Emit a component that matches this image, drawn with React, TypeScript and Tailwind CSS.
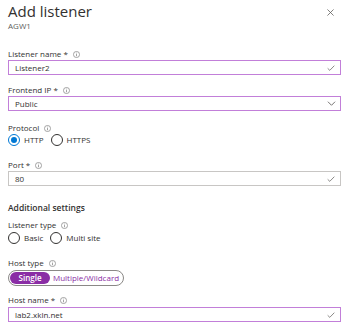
import React from "react";

const font = { fontFamily: '"Open Sans", "Noto Sans", sans-serif' };

function Info() {
  return (
    <svg width="7" height="7" viewBox="0 0 16 16" className="ml-[5px] inline-block" fill="none">
      <circle cx="8" cy="8" r="7" stroke="#707070" strokeWidth="1.4" />
      <line x1="8" y1="7" x2="8" y2="12" stroke="#707070" strokeWidth="1.5" />
      <circle cx="8" cy="4.5" r="1" fill="#707070" />
    </svg>
  );
}

function Label({ text, req }: { text: string; req?: boolean }) {
  return (
    <div className="flex items-center h-[10px] text-[8px] text-[#323130] leading-[10px]">
      <span>
        {text}
        {req ? " *" : ""}
      </span>
      <Info />
    </div>
  );
}

function Check() {
  return (
    <svg width="8" height="6" viewBox="0 0 12 9" fill="none">
      <path d="M1 5 L4.2 8 L11 1" stroke="#605e5c" strokeWidth="1.1" />
    </svg>
  );
}

function Chevron() {
  return (
    <svg width="9" height="5" viewBox="0 0 12 7" fill="none">
      <path d="M1 1 L6 6 L11 1" stroke="#605e5c" strokeWidth="1.2" />
    </svg>
  );
}

function Input({ value, purple, chevron, mt }: { value: string; purple?: boolean; chevron?: boolean; mt: string }) {
  return (
    <div
      className={`${mt} h-[15px] w-[333px] flex items-center justify-between pl-[6px] ${chevron ? "pr-[4px]" : "pr-[5px]"} border text-[8px] text-[#323130] ${
        purple ? "border-[#c27fd9]" : "border-[#c8c6c4]"
      }`}
    >
      <span className="leading-[10px]">{value}</span>
      {chevron ? <Chevron /> : <Check />}
    </div>
  );
}

function Radio({ label, checked }: { label: string; checked?: boolean }) {
  return (
    <div className="flex items-center">
      <div
        className={`w-[12px] h-[12px] rounded-full border flex items-center justify-center ${
          checked ? "border-[#0078d4]" : "border-[#323130]"
        }`}
      >
        {checked && <div className="w-[6px] h-[6px] rounded-full bg-[#0078d4]" />}
      </div>
      <span className="ml-[4px] text-[8px] text-[#323130] leading-[10px]">{label}</span>
    </div>
  );
}

export default function App() {
  return (
    <div className="w-[350px] h-[328px] bg-white overflow-hidden px-[8px] relative" style={font}>
      <div className="pt-[1px] text-[15px] leading-[20px] text-[#323130]">Add listener</div>
      <div className="text-[8px] leading-[10px] text-[#605e5c]">AGW1</div>
      <svg width="7" height="7" viewBox="0 0 8 8" className="absolute left-[327px] top-[9px]">
        <path d="M0.5 0.5 L7.5 7.5 M7.5 0.5 L0.5 7.5" stroke="#605e5c" strokeWidth="0.9" />
      </svg>

      <div className="mt-[18px]">
        <Label text="Listener name" req />
        <Input value="Listener2" purple mt="mt-[1px]" />
      </div>
      <div className="mt-[10px]">
        <Label text="Frontend IP" req />
        <Input value="Public" purple chevron mt="mt-[1px]" />
      </div>
      <div className="mt-[12px]">
        <Label text="Protocol" />
        <div className="flex gap-[7px] mt-[1px]">
          <Radio label="HTTP" checked />
          <Radio label="HTTPS" />
        </div>
      </div>
      <div className="mt-[14px]">
        <Label text="Port" req />
        <Input value="80" mt="mt-[1px]" />
      </div>
      <div className="mt-[16px] text-[8.5px] font-semibold text-[#323130] leading-[12px]">Additional settings</div>
      <div className="mt-[6px]">
        <Label text="Listener type" />
        <div className="flex gap-[7px] mt-[2px]">
          <Radio label="Basic" />
          <Radio label="Multi site" />
        </div>
      </div>
      <div className="mt-[14px]">
        <Label text="Host type" />
        <div className="mt-[2px] w-[116px] h-[16px] rounded-full border border-[#8a8886] flex items-center p-[1px]">
          <div className="h-full w-[40px] rounded-full bg-[#8a2da5] text-white text-[8px] font-semibold flex items-center justify-center leading-[10px]">
            Single
          </div>
          <div className="flex-1 text-center text-[8px] text-[#8a2da5] leading-[10px]">Multiple/Wildcard</div>
        </div>
      </div>
      <div className="mt-[9px]">
        <Label text="Host name" req />
        <Input value="lab2.xkln.net" purple mt="mt-[2px]" />
      </div>
    </div>
  );
}
